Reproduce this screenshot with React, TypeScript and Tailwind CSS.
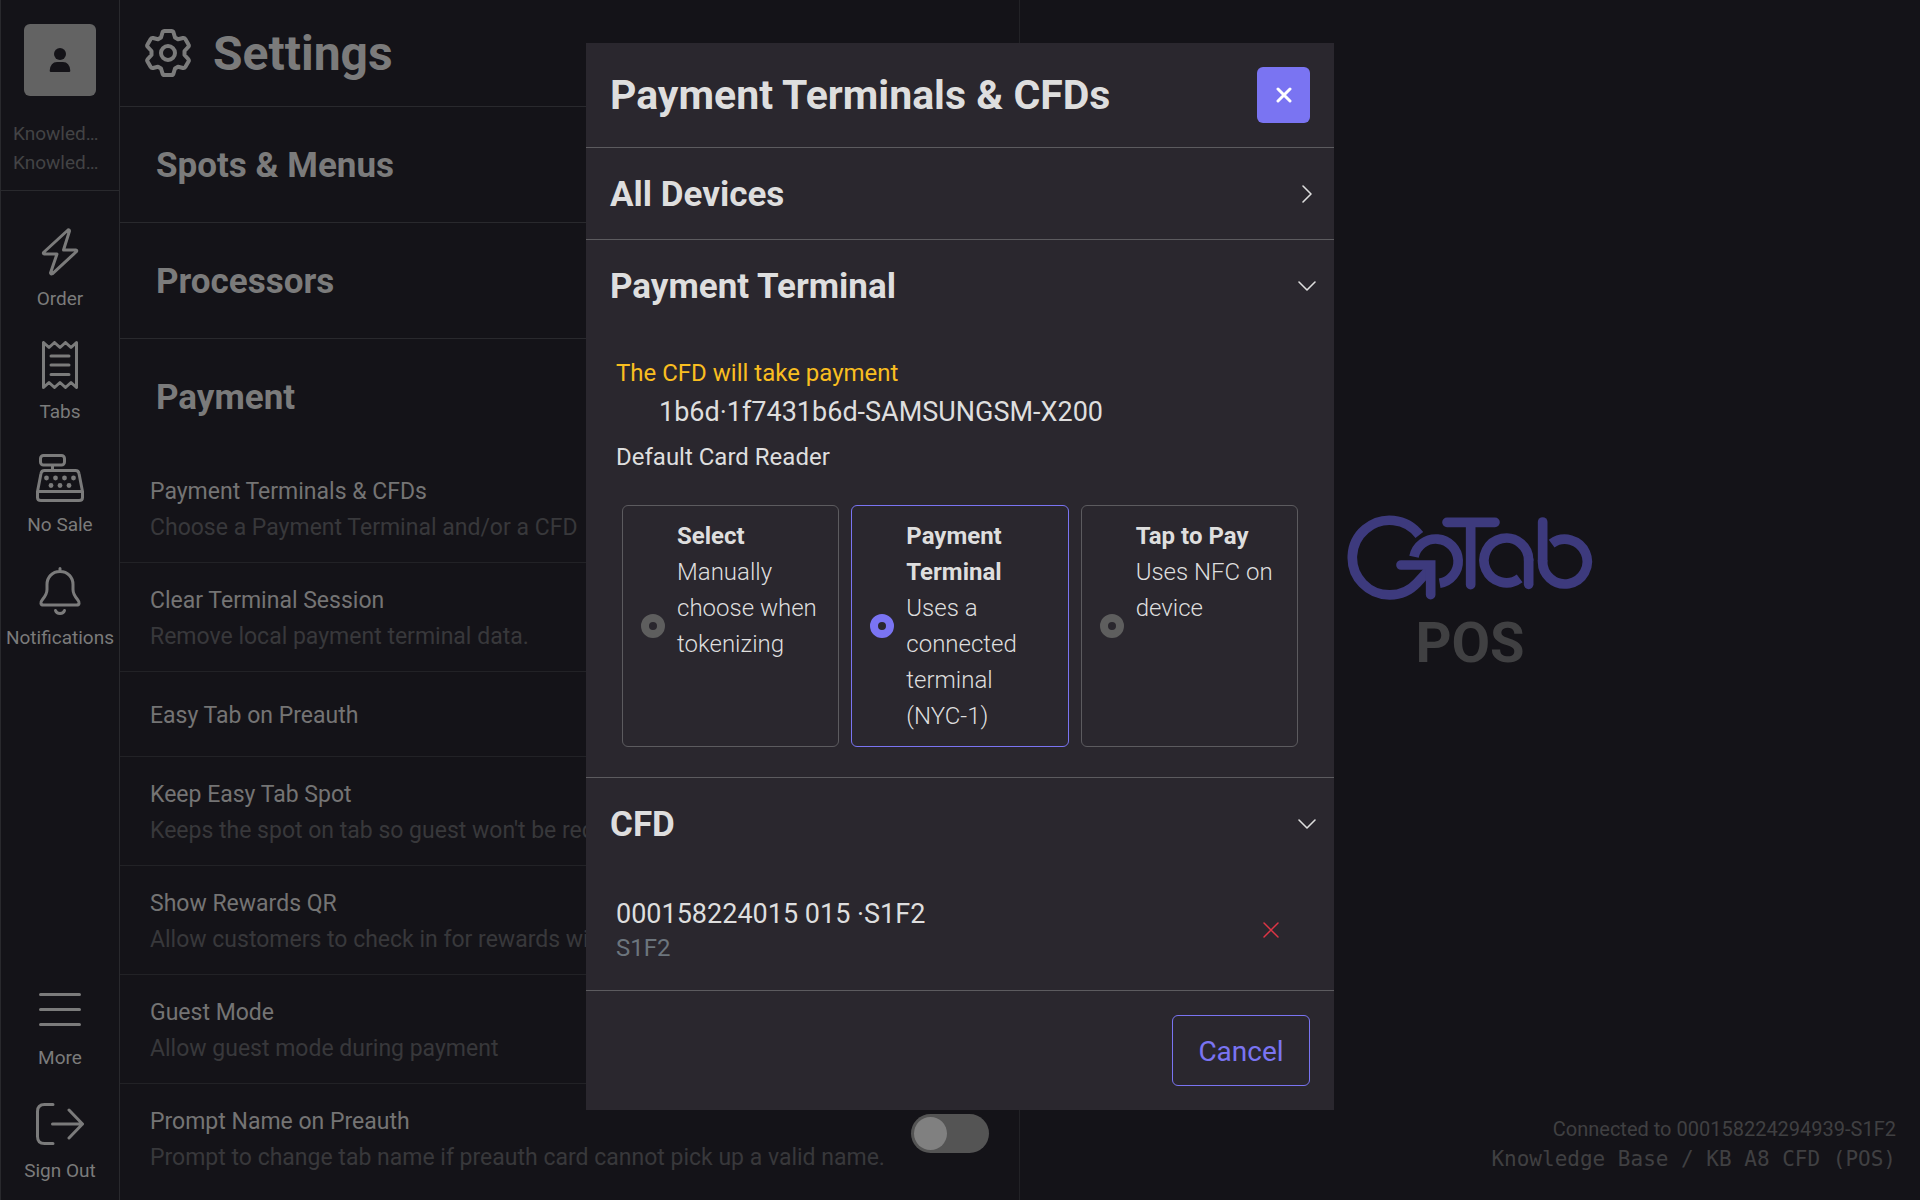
import type { ReactNode } from "react";

const navItems = [
  { label: "Order", icon: <BoltIcon /> },
  { label: "Tabs", icon: <ReceiptIcon /> },
  { label: "No Sale", icon: <RegisterIcon /> },
  { label: "Notifications", icon: <BellIcon /> },
];

const footerItems = [
  { label: "More", icon: <MenuIcon /> },
  { label: "Sign Out", icon: <SignOutIcon /> },
];

const sections = ["Spots & Menus", "Processors"];

const paymentSettings = [
  { title: "Payment Terminals & CFDs", text: "Choose a Payment Terminal and/or a CFD" },
  { title: "Clear Terminal Session", text: "Remove local payment terminal data." },
  { title: "Easy Tab on Preauth" },
  { title: "Keep Easy Tab Spot", text: "Keeps the spot on tab so guest won't be required" },
  { title: "Show Rewards QR", text: "Allow customers to check in for rewards with QR" },
  { title: "Guest Mode", text: "Allow guest mode during payment" },
  {
    title: "Prompt Name on Preauth",
    text: "Prompt to change tab name if preauth card cannot pick up a valid name.",
    toggle: true,
  },
];

const readers = [
  { id: "select", title: "Select", text: "Manually choose when tokenizing" },
  { id: "terminal", title: "Payment Terminal", text: "Uses a connected terminal (NYC-1)" },
  { id: "tap", title: "Tap to Pay", text: "Uses NFC on device" },
];

function LineIcon({ children }: { children: ReactNode }) {
  return (
    <svg
      className="size-12"
      viewBox="0 0 48 48"
      fill="none"
      stroke="currentColor"
      strokeWidth="3"
      strokeLinecap="round"
      strokeLinejoin="round"
      aria-hidden="true"
    >
      {children}
    </svg>
  );
}

function BoltIcon() {
  return (
    <LineIcon>
      <path d="M32 2 7.5 24.5q-.5 1.3.8 1.5H21L14.5 45q.4 1.6 1.8.8L40.5 23.5q.7-1.3-.7-1.5H27.5L33.5 3q-.2-1.500-1.500-1z" />
    </LineIcon>
  );
}

function ReceiptIcon() {
  return (
    <LineIcon>
      <path d="M7.5 1.5v45l5.5-5 5.5 5 5.5-5 5.5 5 5.5-5 5.5 5v-45l-5.5 5-5.5-5-5.5 5-5.5-5-5.5 5zM15 15h18M15 24h18M15 33.5h18" />
    </LineIcon>
  );
}

function RegisterIcon() {
  return (
    <LineIcon>
      <rect x="4.5" y="1.5" width="24" height="9.5" rx="3" />
      <path d="M16.5 11.5v5M8.5 16.5h31q3 0 3.5 3l3.5 18v6q0 3-3.5 3H5q-3.5 0-3.5-3v-6l3.5-18q.5-3 3.5-3zM2 37.5h44" />
      <g fill="currentColor" stroke="none">
        <circle cx="10.5" cy="24" r="2.4" />
        <circle cx="19.5" cy="24" r="2.4" />
        <circle cx="28.5" cy="24" r="2.4" />
        <circle cx="37.5" cy="24" r="2.4" />
        <circle cx="15" cy="31.5" r="2.4" />
        <circle cx="24" cy="31.5" r="2.4" />
        <circle cx="33" cy="31.5" r="2.4" />
      </g>
    </LineIcon>
  );
}

function BellIcon() {
  return (
    <LineIcon>
      <path d="M24 1.5v3M24 4.5c-8 0-13 6-13 13v5c0 4-2 7-4.5 10-2.5 3-2 5.5 1 5.5h33c3 0 3.5-2.5 1-5.5-2.5-3-4.5-6-4.5-10v-5c0-7-5-13-13-13zM19.5 43.5q1 3 4.5 3t4.5-3" />
    </LineIcon>
  );
}

function MenuIcon() {
  return (
    <LineIcon>
      <path d="M4.5 7.5h39M4.5 22.5h39M4.5 37.5h39" />
    </LineIcon>
  );
}

function SignOutIcon() {
  return (
    <LineIcon>
      <path d="M17 4.5H8.5q-7 0-7 7v25q0 7 7 7H17M16.5 24h30M33 10l13.5 14L33 38" />
    </LineIcon>
  );
}

function GearIcon() {
  return (
    <svg className="size-12" viewBox="0 0 48 48" fill="none" stroke="currentColor" strokeWidth="4" strokeLinejoin="round" aria-hidden="true">
      <circle cx="24" cy="24" r="7" />
      <path d="M20.5 2h7q1.5 0 2 1.5l1.5 5 3 1.8 5-1.3q1.5-.3 2.3 1l3.2 5.5q.8 1.3-.3 2.5L40.500 22v4l3.700 4q1.100 1.200.3 2.500L41.300 38q-.8 1.300-2.300 1l-5-1.300-3 1.800-1.500 5q-.5 1.500-2 1.500h-7q-1.500 0-2-1.500l-1.500-5-3-1.800L9 39q-1.500.3-2.300-1l-3.200-5.500q-.8-1.300.3-2.500l3.700-4v-4l-3.700-4q-1.100-1.200-.3-2.500L6.700 10q.8-1.300 2.300-1l5 1.300 3-1.800 1.500-5q.5-1.500 2-1.500z" />
    </svg>
  );
}

function Chevron({ down }: { down?: boolean }) {
  return (
    <svg className="size-6" viewBox="0 0 24 24" fill="none" stroke="currentColor" strokeWidth="1.6" strokeLinecap="round" strokeLinejoin="round" aria-hidden="true">
      <path d={down ? "M4 8l8 8 8-8" : "M8 4l8 8-8 8"} />
    </svg>
  );
}

function Logo() {
  return (
    <svg className="w-[246px]" viewBox="82 74 738 260" fill="none" stroke="currentColor" strokeWidth="29" role="img" aria-label="GoTab">
      <path d="M299 137A112 112 0 1 0 292 281L330 240" />
      <path d="M244 227H333V316" strokeLinecap="round" />
      <path d="M283 202A67 67 0 1 1 360 282" />
      <path d="M382 99H526M453 99V286" strokeLinecap="round" />
      <path d="M600 267A67 67 0 1 1 627 214" />
      <path d="M627 212V285" strokeLinecap="round" />
      <path d="M669 98V214" strokeLinecap="round" />
      <path d="M669 212A67 67 0 1 0 696 163" />
    </svg>
  );
}

function NavButton({ label, icon }: { label: string; icon: ReactNode }) {
  return (
    <button type="button" className="flex w-full flex-col items-center gap-2 text-[19px] leading-[30px] text-[#7b7b7b]">
      {icon}
      {label}
    </button>
  );
}

function Sidebar() {
  return (
    <nav className="flex w-[120px] shrink-0 flex-col border-x border-[#29292d]">
      <div className="flex flex-col items-center border-b border-[#29292d] pt-6 pb-[13px]">
        <button type="button" aria-label="Account" className="flex size-[72px] items-center justify-center rounded-md bg-[#636363] text-[#141318]">
          <svg className="size-6" viewBox="0 0 24 24" fill="currentColor" aria-hidden="true">
            <circle cx="12" cy="6" r="6" />
            <path d="M3 24q-1.5 0-1.3-1.5Q2.5 14 9 14h6q6.5 0 7.3 8.5.2 1.5-1.3 1.5z" />
          </svg>
        </button>
        <p className="mt-[23px] w-full pl-3 text-[19px] leading-[29px] text-[#434345]">
          Knowled…
          <br />
          Knowled…
        </p>
      </div>
      <div className="flex flex-col gap-[27px] pt-[37px]">
        {navItems.map((item) => (
          <NavButton key={item.label} {...item} />
        ))}
      </div>
      <div className="mt-auto flex flex-col gap-[27px] pb-[14px]">
        {footerItems.map((item) => (
          <NavButton key={item.label} {...item} />
        ))}
      </div>
    </nav>
  );
}

function Settings() {
  return (
    <main className="flex w-[900px] shrink-0 flex-col border-r border-[#222226]">
      <header className="flex h-[107px] shrink-0 items-center gap-[21px] border-b border-[#29292d] px-6 text-[#7b7b7b]">
        <GearIcon />
        <h1 className="pt-0.5 text-5xl font-bold">Settings</h1>
      </header>
      {sections.map((name) => (
        <button key={name} type="button" className="h-[116px] shrink-0 border-b border-[#29292d] px-9 pt-1 text-left text-[35px] font-bold text-[#7b7b7b]">
          {name}
        </button>
      ))}
      <button type="button" className="h-[115px] shrink-0 px-9 pt-1 text-left text-[35px] font-bold text-[#7b7b7b]">
        Payment
      </button>
      <ul className="text-[23px] leading-9">
        {paymentSettings.map((item) => (
          <li key={item.title} className="flex items-center justify-between border-b border-[#222226] px-[30px] last:border-b-0">
            <div className={item.text ? "pt-5 pb-4" : "pt-[26px] pb-[22px]"}>
              <p className="text-[#747474]">{item.title}</p>
              {item.text && <p className="whitespace-nowrap text-[#38383b]">{item.text}</p>}
            </div>
            {item.toggle && (
              <input
                type="checkbox"
                role="switch"
                aria-label={item.title}
                className="mt-[30px] h-[39px] w-[78px] shrink-0 appearance-none self-start rounded-full bg-[#545454] p-[3px] before:block before:size-[33px] before:rounded-full before:bg-[#808080] checked:before:ml-auto"
              />
            )}
          </li>
        ))}
      </ul>
    </main>
  );
}

function Welcome() {
  return (
    <aside className="flex flex-1 flex-col text-[#404042]">
      <div className="flex flex-1 flex-col items-center pt-[514px]">
        <div className="text-[#3d3a7d]">
          <Logo />
        </div>
        <p className="mt-3 text-[56px] leading-[60px] font-bold">POS</p>
      </div>
      <footer className="px-6 pb-[26px] text-right">
        <p className="text-xl leading-[29px]">Connected to 000158224294939-S1F2</p>
        <p className="font-['DejaVu_Sans_Mono',monospace] text-[21px] leading-[30px]">Knowledge Base / KB A8 CFD (POS)</p>
      </footer>
    </aside>
  );
}

function SectionButton({ title, open }: { title: string; open?: boolean }) {
  return (
    <button type="button" aria-expanded={!!open} className="flex h-[91px] w-full items-center justify-between pr-[15px] pl-6 text-left text-[35px] font-bold">
      <span className="pt-1">{title}</span>
      <Chevron down={open} />
    </button>
  );
}

function TerminalsDialog() {
  return (
    <div className="fixed inset-0 flex items-start justify-center pt-[43px]">
      <div role="dialog" aria-modal="true" aria-labelledby="dialog-title" className="w-[748px] divide-y divide-[#5c5b5f] bg-[#2a272e] text-[#dedede]">
        <header className="flex h-[105px] items-center justify-between px-6">
          <h2 id="dialog-title" className="pt-0.5 text-[41px] font-bold">
            Payment Terminals &amp; CFDs
          </h2>
          <button type="button" aria-label="Close" className="flex h-14 w-[53px] items-center justify-center rounded-md bg-[#7a74f2] text-white">
            <svg className="size-4" viewBox="0 0 16 16" fill="none" stroke="currentColor" strokeWidth="3" strokeLinecap="round" aria-hidden="true">
              <path d="M2 2l12 12M14 2 2 14" />
            </svg>
          </button>
        </header>

        <section>
          <SectionButton title="All Devices" />
        </section>

        <section>
          <SectionButton title="Payment Terminal" open />
          <div className="px-[30px] pt-6 pb-[30px]">
            <p className="text-2xl leading-9 text-[#f9be20]">The CFD will take payment</p>
            <p className="pl-[43px] text-[27px] leading-[42px]">1b6d·1f7431b6d-SAMSUNGSM-X200</p>
            <fieldset>
              <legend className="pt-1.5 text-2xl leading-9">Default Card Reader</legend>
              <div className="grid grid-cols-3 gap-3 px-1.5 pt-[30px]">
                {readers.map((reader) => (
                  <label
                    key={reader.id}
                    className="flex gap-3 rounded-md border border-[#5c5b5f] py-3 pr-3 pl-[18px] has-checked:border-[#7a74f2]"
                  >
                    <input
                      type="radio"
                      name="reader"
                      defaultChecked={reader.id === "terminal"}
                      className="size-6 shrink-0 appearance-none self-center rounded-full border-8 border-[#5e5e5e] checked:border-[#7a74f2]"
                    />
                    <span className="text-2xl leading-9 font-light">
                      <strong className="block font-bold">{reader.title}</strong>
                      {reader.text}
                    </span>
                  </label>
                ))}
              </div>
            </fieldset>
          </div>
        </section>

        <section>
          <SectionButton title="CFD" open />
          <div className="flex items-center justify-between pt-[27px] pr-[55px] pb-[26px] pl-[30px]">
            <div>
              <p className="text-[27px] leading-9">000158224015 015 ·S1F2</p>
              <p className="text-2xl leading-8 text-[#6c757d]">S1F2</p>
            </div>
            <button type="button" aria-label="Remove CFD" className="text-[#dc3545]">
              <svg className="size-4" viewBox="0 0 16 16" fill="none" stroke="currentColor" strokeWidth="1.5" strokeLinecap="round" aria-hidden="true">
                <path d="M1 1l14 14M15 1 1 15" />
              </svg>
            </button>
          </div>
        </section>

        <footer className="flex justify-end p-6">
          <button type="button" className="h-[71px] min-w-[138px] rounded-md border border-[#7a74f2] px-6 pt-0.5 text-[28px] text-[#7a74f2]">
            Cancel
          </button>
        </footer>
      </div>
    </div>
  );
}

export default function App() {
  return (
    <div className="flex h-screen overflow-hidden bg-[#141318] font-[Roboto,sans-serif]">
      <Sidebar />
      <Settings />
      <Welcome />
      <TerminalsDialog />
    </div>
  );
}
